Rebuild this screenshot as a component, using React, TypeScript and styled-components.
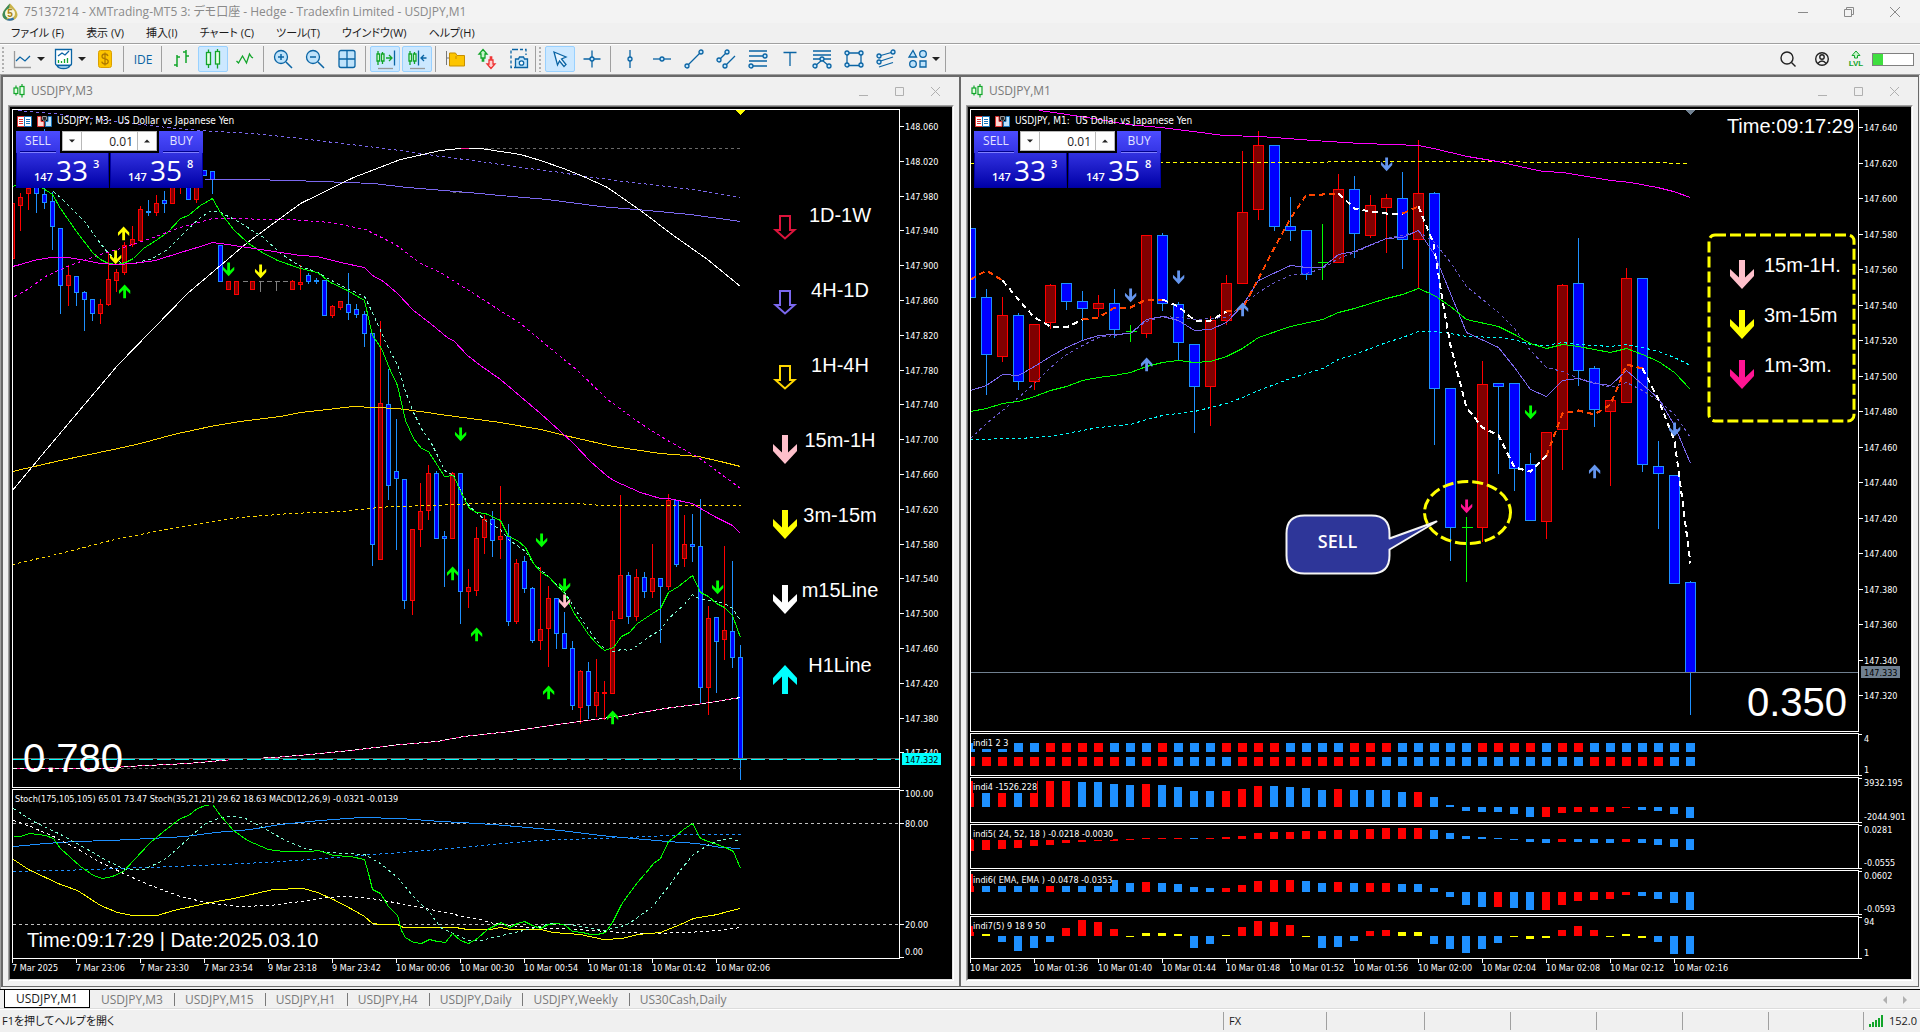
import React from "react";
import styled, { createGlobalStyle, css } from "styled-components";

/* ------------------------------------------------------------------ */
/* Theme                                                               */
/* ------------------------------------------------------------------ */

const UI_FONT = '"Open Sans", "Noto Sans CJK JP", sans-serif';
const CHART_FONT = '"DejaVu Sans Condensed", "Noto Sans", sans-serif';
const LABEL_FONT = '"Liberation Sans", Arial, sans-serif';

const c = {
  face: "#f0f0f0",
  shade: "#a0a0a0",
  dark: "#696969",
  blue: "#0a64a4",
  sky: "#bfe3fb",
  green: "#12a52a",
  up: "#ff0000",
  down: "#1e90ff",
};

const GlobalStyle = createGlobalStyle`
  * { box-sizing: border-box; }
  body { margin: 0; background: ${c.face}; font-family: ${UI_FONT}; font-size: 12px; color: #1a1a1a; }
  button, input { font: inherit; color: inherit; margin: 0; padding: 0; border: 0; background: none; border-radius: 0; }
  svg { display: block; flex: none; }
`;

/* ------------------------------------------------------------------ */
/* Application frame                                                   */
/* ------------------------------------------------------------------ */

const Frame = styled.div`
  display: flex;
  flex-direction: column;
  height: 100vh;
  background: ${c.face};
  overflow: hidden;
`;

const TitleBar = styled.header`
  display: flex;
  align-items: center;
  height: 23px;
  padding: 0 2px;
  background: #f3f3f3;
  color: #8a8a8a;
`;

const AppTitle = styled.h1`
  flex: 1;
  margin: 0 0 0 6px;
  font-size: 12px;
  line-height: 20px;
  font-weight: 400;
  white-space: nowrap;
  font-feature-settings: "palt";
`;

const CaptionButton = styled.button`
  display: grid;
  place-items: center;
  width: 46px;
  height: 20px;
`;

const MenuBar = styled.nav`
  display: flex;
  align-items: center;
  height: 20px;
  padding-left: 11px;
  gap: 22px;
  font-size: 11px;
  line-height: 20px;
  font-feature-settings: "palt";
`;

const MenuButton = styled.button`
  white-space: nowrap;
`;

const ToolBar = styled.div`
  display: flex;
  align-items: center;
  height: 32px;
  border-top: 1px solid ${c.shade};
  border-bottom: 1px solid ${c.shade};
  box-shadow: inset 0 1px 0 #fff;
`;

const Grip = styled.span`
  width: 7px;
  height: 26px;
  background: radial-gradient(circle, #b0b0b0 1px, transparent 1px) 0 0 / 6px 4px repeat-y;
`;

const Divider = styled.span<{ $tight?: boolean }>`
  width: 1px;
  height: 26px;
  margin: ${(p) => (p.$tight ? "0 1px 0 0" : "0 3px 0 2px")};
  background: ${c.shade};
`;

const Tool = styled.button<{ $on?: boolean }>`
  display: grid;
  place-items: center;
  width: 30px;
  height: 26px;
  margin: 0 1px;
  border-radius: 2px;
  color: ${c.blue};
  ${(p) =>
    p.$on &&
    css`
      background: #cce8ff;
      border: 1px solid #99d1ff;
    `}
`;

const DropTool = styled.button`
  display: grid;
  place-items: center;
  width: 9px;
  height: 26px;
  margin: 0 3px 0 -3px;
`;

const Spring = styled.span`
  flex: 1;
`;

const ToolTail = styled.div`
  display: flex;
  align-items: center;
  gap: 2px;
`;

const Meter = styled.div`
  width: 42px;
  height: 13px;
  margin-right: 6px;
  border: 1px solid #808080;
  background: linear-gradient(to right, #3fdf3f 10px, #fff 10px);
`;

/* ------------------------------------------------------------------ */
/* Chart windows                                                       */
/* ------------------------------------------------------------------ */

const Workspace = styled.main`
  display: grid;
  grid-template-columns: minmax(0, 1fr) minmax(0, 1fr);
  flex: 1;
  min-height: 0;
  padding: 0 1px 2px 0;
  border-left: 1px solid ${c.shade};
`;

const ChartWindow = styled.section<{ $first?: boolean }>`
  display: flex;
  flex-direction: column;
  min-height: 0;
  padding: 0 5px 5px;
  border: 1px solid ${c.dark};
  border-top-width: 2px;
  border-left-width: ${(p) => (p.$first ? 2 : 1)}px;
`;

const WindowBar = styled.header`
  display: flex;
  align-items: center;
  height: 28px;
  padding: 0 1px 0 5px;
  color: #7a7a7a;
`;

const WindowTitle = styled.h2`
  flex: 1;
  margin: 0 0 0 6px;
  font-size: 12px;
  line-height: 20px;
  font-weight: 400;
`;

const WindowButton = styled.button`
  display: grid;
  place-items: center;
  width: 36px;
  height: 24px;
`;

const Well = styled.div`
  display: flex;
  flex: 1;
  min-height: 0;
  border: 1px solid ${c.shade};
  border-right-color: #fff;
  border-bottom-color: #fff;
`;

const ChartArea = styled.div`
  display: flex;
  flex-direction: column;
  flex: 1;
  min-width: 0;
  padding: 2px 0 0 2px;
  gap: 1px;
  border: 1px solid ${c.dark};
  border-right-color: #e3e3e3;
  border-bottom-color: #e3e3e3;
  background: #000;
  color: #fff;
  font-family: ${CHART_FONT};
  font-size: 9px;
  line-height: 12px;
`;

const Pane = styled.div<{ $height?: number }>`
  display: grid;
  grid-template-columns: minmax(0, 1fr) 52px;
  min-height: 0;
  ${(p) => (p.$height ? `height: ${p.$height}px;` : "flex: 1;")}
`;

const Plot = styled.div`
  position: relative;
  overflow: hidden;
  border: 1px solid #fff;
`;

const Canvas = styled.svg`
  width: 100%;
  height: 100%;
`;

const AxisCanvas = styled.svg`
  width: 52px;
  height: 100%;
  fill: #fff;
  font-family: ${CHART_FONT};
  font-size: 9px;
`;

const RangeAxis = styled.div`
  display: flex;
  flex-direction: column;
  justify-content: space-between;
  padding-left: 5px;
  background: linear-gradient(#fff, #fff) 0 1px / 3px 1px no-repeat,
    linear-gradient(#fff, #fff) 0 100% / 3px 1px no-repeat;
  white-space: nowrap;
`;

const PaneCaption = styled.span`
  position: absolute;
  top: 3px;
  left: 2px;
  background: #000;
  white-space: nowrap;
`;

const TimeAxis = styled.div`
  display: flex;
  height: 20px;
  margin-top: -1px;
  overflow: hidden;
`;

const TimeTick = styled.span`
  width: 64px;
  flex: none;
  padding-top: 3px;
  white-space: nowrap;
  background: linear-gradient(#fff, #fff) 0 0 / 1px 4px no-repeat;
`;

const ChartHeading = styled.div`
  position: absolute;
  top: 5px;
  left: 4px;
  display: flex;
  align-items: center;
  gap: 5px;
  font-size: 10px;
  white-space: pre;
`;

const BigFigure = styled.output<{ $right?: boolean }>`
  position: absolute;
  bottom: 9px;
  ${(p) => (p.$right ? "right: 11px;" : "left: 10px;")}
  font: 40px / 40px ${LABEL_FONT};
`;

const Clock = styled.time<{ $top?: boolean }>`
  position: absolute;
  ${(p) => (p.$top ? "top: 4px; right: 4px;" : "bottom: 6px; left: 14px;")}
  font: 20px / 24px ${LABEL_FONT};
  white-space: nowrap;
`;

/* One-click trading panel */

const TradePanel = styled.form`
  position: absolute;
  top: 21px;
  left: 3px;
  width: 187px;
  background: #000;
  font-family: ${UI_FONT};
  color: #e4e4ff;
`;

const TradeRow = styled.div`
  display: flex;
  justify-content: space-between;
`;

const SideButton = styled.button`
  width: 44px;
  height: 22px;
  padding-bottom: 2px;
  font-size: 12px;
  line-height: 18px;
  background: linear-gradient(#8080ff, #8080ff) 50% 100% / 36px 1px no-repeat,
    linear-gradient(#00008c, #00008c) 50% 20px / 36px 1px no-repeat,
    linear-gradient(#4c4cff, #3434e4);
`;

const Volume = styled.div`
  display: grid;
  grid-template-columns: 18px 1fr 18px;
  gap: 1px;
  width: 95px;
  height: 20px;
  padding: 1px;
  background: #b8b8b8;
  color: #222;
`;

const Step = styled.button`
  display: grid;
  place-items: center;
  background: #fdfdfd;
`;

const VolumeInput = styled.input`
  min-width: 0;
  padding-right: 4px;
  background: #fff;
  font-size: 12px;
  text-align: right;
`;

const QuoteButton = styled.button`
  display: flex;
  align-items: baseline;
  gap: 3px;
  width: 93px;
  height: 35px;
  padding-left: 17px;
  border: 1px solid #0000a0;
  border-top: 0;
  background: linear-gradient(#3232e0, #0000a8);
  color: #fff;
  font-size: 11px;
  line-height: 34px;
  font-weight: 600;
`;

const Pips = styled.span`
  font-size: 28px;
  font-weight: 400;
`;

const Fraction = styled.span`
  align-self: flex-start;
  padding-left: 2px;
  line-height: 22px;
`;

/* Signal legend */

const LegendBox = styled.ul<{ $framed?: boolean }>`
  position: absolute;
  margin: 0;
  list-style: none;
  ${(p) =>
    p.$framed
      ? "top: 123px; right: 2px; width: 149px; padding: 20px 0 20px 22px;"
      : "top: 93px; right: 19px; padding: 0;"}
`;

const LegendFrame = styled.svg`
  position: absolute;
  inset: 0;
  width: 100%;
  height: 100%;
  rect {
    width: calc(100% - 4px);
    height: calc(100% - 4px);
  }
`;

const LegendRow = styled.li<{ $framed?: boolean }>`
  display: flex;
  height: ${(p) => (p.$framed ? 50 : 75)}px;
  gap: ${(p) => (p.$framed ? 9 : 2)}px;
  font: 20px / 24px ${LABEL_FONT};
  white-space: nowrap;
  svg {
    margin-top: 7px;
  }
`;

const LegendText = styled.span<{ $framed?: boolean }>`
  width: 80px;
  text-align: ${(p) => (p.$framed ? "left" : "center")};
`;

/* ------------------------------------------------------------------ */
/* Bottom bars                                                         */
/* ------------------------------------------------------------------ */

const TabBar = styled.div`
  display: flex;
  align-items: stretch;
  height: 21px;
  padding-left: 4px;
  border-top: 1px solid #000;
  border-bottom: 1px solid #fff;
  box-shadow: inset 0 -1px 0 #dcdcdc;
`;

const TabList = styled.div`
  display: flex;
  flex: 1;
  align-items: flex-start;
`;

const Tab = styled.button<{ $active?: boolean }>`
  position: relative;
  height: 19px;
  padding: 0 11px;
  line-height: 18px;
  color: #7a7a7a;
  & + &::before {
    content: "";
    position: absolute;
    left: 0;
    top: 3px;
    width: 1px;
    height: 13px;
    background: #7a7a7a;
  }
  ${(p) =>
    p.$active &&
    css`
      height: 18px;
      border: 1px solid #000;
      border-top: 0;
      background: #fff;
      color: #1a1a1a;
      & + button::before {
        display: none;
      }
    `}
`;

const ScrollTabs = styled.button`
  display: grid;
  place-items: center;
  width: 20px;
  &:last-child {
    margin-right: 5px;
  }
`;

const StatusBar = styled.footer`
  display: flex;
  align-items: center;
  height: 22px;
  padding-left: 2px;
  font-size: 11px;
  line-height: 18px;
`;

const Hint = styled.span`
  flex: 1;
  font-feature-settings: "palt";
`;

const StatusCell = styled.span<{ $width: number }>`
  display: flex;
  align-items: center;
  gap: 5px;
  width: ${(p) => p.$width}px;
  height: 18px;
  padding-left: 5px;
  border-left: 1px solid ${c.shade};
`;

/* ------------------------------------------------------------------ */
/* Icons                                                               */
/* ------------------------------------------------------------------ */

const Glyph = ({ children, size = 22 }: { children: React.ReactNode; size?: number }) => (
  <svg width={size} height={size} viewBox="0 0 22 22" fill="none" stroke={c.blue} strokeWidth="1.3" aria-hidden>
    {children}
  </svg>
);

const Dot = ({ x, y }: { x: number; y: number }) => <circle cx={x} cy={y} r="2" fill={c.sky} strokeWidth="1.3" />;

const Caret = ({ up = false, size = 7 }: { up?: boolean; size?: number }) => (
  <svg width={size} height="4" viewBox="0 0 8 4" fill="#222" aria-hidden>
    <path d={up ? "M0 4h8L4 0z" : "M0 0h8L4 4z"} />
  </svg>
);

const icons: Record<string, React.ReactNode> = {
  chart: (
    <Glyph>
      <path d="M2.5 3v16.5H19" stroke="#9a9a9a" />
      <path d="M4 13l4-4 5 4 5-5" />
    </Glyph>
  ),
  profile: (
    <Glyph>
      <path d="M2.5 1.5h16v14a2 2 0 0 1-2 2h-12a2 2 0 0 1-2-2z" fill="#fff" />
      <path d="M5 8l4-3 3 2 4-4" />
      <path d="M5.500 15v-3M8.500 15v-2M11.500 15v-4M14.500 15v-5" stroke={c.green} />
      <path d="M4 17.500q1 3 6.500 3t6.500-3z" fill={c.sky} />
    </Glyph>
  ),
  money: (
    <svg width="22" height="22" viewBox="0 0 22 22" aria-hidden>
      <rect x="4.5" y="2.5" width="13" height="17" rx="2" fill="#fdc500" stroke="#dba000" />
      <path d="M14 8c-.5-1.500-1.700-2-3-2-1.700 0-3 .8-3 2.400 0 3.400 6.200 1.700 6.200 5 0 1.600-1.400 2.500-3.200 2.500-1.600 0-2.900-.8-3.200-2.300M11 4.500v13" fill="none" stroke="#b07a00" strokeWidth="1.3" />
    </svg>
  ),
  bars: (
    <Glyph>
      <g stroke={c.green} strokeWidth="1.5">
        <path d="M7 7v12M4 17h3M7 9h3M16 2v13M13 4h3M16 8h3" />
      </g>
    </Glyph>
  ),
  candles: (
    <Glyph>
      <g stroke={c.green} fill="#e6ffe6">
        <path d="M6.500 1.500v3M6.500 16v4M15.500 1v2.500M15.500 16v4.500" />
        <rect x="4.5" y="4.5" width="4" height="12" />
        <rect x="13.5" y="3.5" width="4" height="12.5" />
      </g>
    </Glyph>
  ),
  zigzag: (
    <Glyph>
      <path d="M2.500 13l2 2 4-7 4 7 3-9 2 3 1.500 1" stroke={c.green} />
    </Glyph>
  ),
  zoomIn: (
    <Glyph>
      <circle cx="9" cy="9" r="6.5" fill={c.sky} />
      <path d="M6 9h6M9 6v6M14 14l6 6" strokeWidth="1.5" />
    </Glyph>
  ),
  zoomOut: (
    <Glyph>
      <circle cx="9" cy="9" r="6.5" fill={c.sky} />
      <path d="M6 9h6M14 14l6 6" strokeWidth="1.5" />
    </Glyph>
  ),
  tile: (
    <Glyph>
      <rect x="3" y="2.5" width="16" height="17" rx="2" fill={c.sky} />
      <path d="M11 2.500v17M3 11h16" />
    </Glyph>
  ),
  scrollEnd: (
    <Glyph>
      <g stroke={c.green}>
        <path d="M4 3v14M8.500 4v12M12 10h6M15 7l3 3-3 3" />
        <path d="M3 6h2.500v7H3zM7.500 6H10v7H7.500z" fill="#e6ffe6" />
      </g>
      <path d="M20.500 2.500v15" />
      <path d="M4 20.500h15" stroke="#999" />
    </Glyph>
  ),
  shiftEnd: (
    <Glyph>
      <g stroke={c.green}>
        <path d="M4 3v14M8.500 4v12" />
        <path d="M3 6h2.500v7H3zM7.500 6H10v7H7.500z" fill="#e6ffe6" />
      </g>
      <path d="M12.500 2.500v15M15 10h5.500M18 7l-3 3 3 3" />
      <path d="M4 20.500h15" stroke="#999" />
    </Glyph>
  ),
  folder: (
    <svg width="22" height="22" viewBox="0 0 22 22" aria-hidden>
      <path d="M2.500 3v14M2.500 10H6" stroke="#777" fill="none" />
      <path d="M5.500 5h6l1.500 2.500h7.500v10.500h-15z" fill="#fdc500" stroke="#c78f00" />
      <path d="M12 11V8" stroke="#c78f00" fill="none" />
    </svg>
  ),
  trade: (
    <Glyph>
      <path d="M7 1.500L11 6H9v4H7.700v3H6.300v-3H5V6H3z" fill="#c8f5cc" stroke={c.green} />
      <path d="M15 20.500l-4-4.500h2v-4h1.300V9h1.400v3H17v4h2z" fill="#ffd0d0" stroke="#e33" />
    </Glyph>
  ),
  camera: (
    <Glyph>
      <path d="M7 1.500H3v18h4M7 1.500h11V7" strokeDasharray="3 2" />
      <path d="M7.500 11h3l1-2h4l1 2h3v8.500h-12z" fill={c.sky} />
      <circle cx="13.500" cy="15" r="2.2" fill="#fff" />
    </Glyph>
  ),
  cursor: (
    <Glyph>
      <path d="M5 4l12 5-4.500 2 4.500 5.500-2 2-4.500-5.500-2 4z" fill="#e8f5ff" />
    </Glyph>
  ),
  cross: (
    <Glyph>
      <path d="M11 2.500v17M2.500 11h17" />
      <Dot x={11} y={11} />
    </Glyph>
  ),
  vline: (
    <Glyph>
      <path d="M11 2v18" />
      <Dot x={11} y={11} />
    </Glyph>
  ),
  hline: (
    <Glyph>
      <path d="M2 11h18" />
      <Dot x={11} y={11} />
    </Glyph>
  ),
  trend: (
    <Glyph>
      <path d="M4 18L18 4" />
      <Dot x={4} y={18} />
      <Dot x={18} y={4} />
    </Glyph>
  ),
  channel: (
    <Glyph>
      <path d="M4 12l8-8M10 18L20 8" />
      <Dot x={4} y={12} />
      <Dot x={12} y={4} />
      <Dot x={10} y={18} />
    </Glyph>
  ),
  fibo: (
    <Glyph>
      <path d="M2 3h18M2 8h18M2 13h18M2 18h18" />
      <Dot x={18} y={8} />
      <Dot x={4} y={18} />
    </Glyph>
  ),
  text: (
    <Glyph>
      <path d="M4.500 4.500h13M11 4.500V18" />
    </Glyph>
  ),
  gann: (
    <Glyph>
      <path d="M2 3h18M2 7h18M2 11h18M4 18l7-6 7 6" />
      <Dot x={11} y={11} />
      <Dot x={4} y={18} />
      <Dot x={18} y={18} />
    </Glyph>
  ),
  shape: (
    <Glyph>
      <path d="M4 5h14v12.500H4z" />
      <Dot x={4} y={5} />
      <Dot x={18} y={5} />
      <Dot x={4} y={17} />
      <Dot x={18} y={17} />
    </Glyph>
  ),
  fork: (
    <Glyph>
      <path d="M4 8l14-4M4 13.500l14-4.500M4 19l14-4.500" />
      <Dot x={4} y={8} />
      <Dot x={18} y={4} />
      <Dot x={4} y={14} />
    </Glyph>
  ),
  objects: (
    <Glyph>
      <path d="M2 9l4-6.500L9.500 9z" fill={c.sky} />
      <circle cx="16" cy="6" r="3.3" fill={c.sky} />
      <circle cx="6" cy="16" r="3.3" fill={c.sky} />
      <path d="M13 13h6v6h-6z" fill={c.sky} />
    </Glyph>
  ),
  search: (
    <Glyph>
      <g stroke="#222" strokeWidth="1.4">
        <circle cx="10" cy="10" r="6" />
        <path d="M14.500 14.500l4 4" />
      </g>
    </Glyph>
  ),
  user: (
    <Glyph>
      <g stroke="#222" strokeWidth="1.4">
        <circle cx="11" cy="11" r="6.3" />
        <circle cx="11" cy="9" r="2.2" />
        <path d="M6.800 15.500q4.200-5 8.400 0" />
      </g>
    </Glyph>
  ),
};

const LevelIcon = () => (
  <svg width="22" height="22" viewBox="0 0 22 22" aria-hidden>
    <path d="M11 3l4 4.500h-2.500V10h-3V7.500H7z" fill="#c8f5cc" stroke={c.green} />
    <text x="11" y="18" textAnchor="middle" fontSize="8" fontWeight="700" fontFamily={LABEL_FONT} fill={c.green}>
      LVL
    </text>
  </svg>
);

const AppLogo = () => (
  <svg width="16" height="18" viewBox="0 0 16 18" aria-hidden>
    <path d="M8 .5C10.500 3 15.500 8 15.500 12a7.500 5.500 0 0 1-15 0C.5 8 5.500 3 8 .5z" fill="#c9b34a" />
    <path d="M8 .5C5.500 3 .5 8 .5 12c0 2 1.500 4 4 5z" fill="#3d8a5a" />
    <path d="M4 17q4 1.500 8-.2l-1-3z" fill="#2c6fae" />
    <circle cx="8" cy="10.5" r="5" fill="#fbf6dc" />
    <text x="8" y="14" textAnchor="middle" fontSize="10" fontWeight="700" fontFamily={LABEL_FONT} fill="#a8830e">
      5
    </text>
  </svg>
);

const CandleBadge = () => (
  <svg width="12" height="14" viewBox="0 0 12 14" fill="#e6ffe6" stroke={c.green} strokeWidth="1.2" aria-hidden>
    <path d="M3 1.500v10M9 0v13.500" />
    <rect x="1" y="4" width="3.8" height="5.5" />
    <rect x="7" y="2.5" width="4" height="8" />
  </svg>
);

const BookIcon = () => (
  <svg width="15" height="11" viewBox="0 0 15 11" aria-hidden>
    <path d="M.5.5h7v10h-7z" fill="#fff" stroke="#d33" />
    <path d="M7.500.5h7v10h-7z" fill="#fff" stroke="#1874b8" />
    <path d="M2 3.500h4M2 5.500h4M2 7.500h4" stroke="#d33" />
    <path d="M9 3.500h4M9 5.500h4M9 7.500h4" stroke="#1874b8" />
  </svg>
);

const DepthIcon = () => (
  <svg width="15" height="11" viewBox="0 0 15 11" aria-hidden>
    <path d="M.5.5H4v5h3v5H.5z" fill="#ffd9d2" stroke="#d33" />
    <path d="M14.500.5H11v5H8.500v5h6z" fill="#bfe3fb" stroke="#1874b8" />
    <path d="M5.500.5h4v3l-2 1.500-2-1.500z" fill="#222" stroke="#999" />
  </svg>
);

/* ------------------------------------------------------------------ */
/* Chart drawing helpers                                               */
/* ------------------------------------------------------------------ */

type Candle = [string, number, number, number, number];
type Line = { p: string; s: string; dash?: string; w?: number };
type Mark = { x: number; y: number; up?: boolean; color: string };

const SOLID_UP = "M13 0L25 13v7l-9-8.500V29h-6V11.500L1 20v-7z";
const SOLID_DOWN = "M13 29L25 16V9l-9 8.500V0h-6v17.500L1 9v7z";
const HOLLOW_DOWN = "M8 6h10v14h4.500L13 28.500 3.500 20H8z";

/* Each candle: kind (R rising, B falling, G doji, N flat), high, top, bottom, low */
const Candles = ({ data, x0, pitch, half }: { data: Candle[]; x0: number; pitch: number; half: number }) => (
  <>
    {data.map(([kind, high, top, bottom, low], i) => {
      const x = x0 + i * pitch;
      const stroke = { R: c.up, B: c.down, G: "#00ff00", N: "#808080" }[kind];
      if (kind === "G" || kind === "N") {
        return <path key={i} stroke={stroke} d={`M${x - half} ${top}H${x + half + 1}M${x} ${high}V${low}`} />;
      }
      return (
        <g key={i} stroke={stroke}>
          <path d={`M${x} ${high}V${low}`} />
          <rect x={x - half} y={top} width={half * 2} height={Math.max(1, bottom - top)} fill={kind === "R" ? "#800000" : "#0000ff"} />
        </g>
      );
    })}
  </>
);

const Lines = ({ data }: { data: Line[] }) => (
  <g fill="none">
    {data.map((l, i) => (
      <polyline key={i} points={l.p} stroke={l.s} strokeDasharray={l.dash} strokeWidth={l.w ?? 1} />
    ))}
  </g>
);

const Marks = ({ data }: { data: Mark[] }) => (
  <g shapeRendering="auto" stroke="none">
    {data.map((m, i) => (
      <path key={i} d={m.up ? SOLID_UP : SOLID_DOWN} fill={m.color} transform={`translate(${m.x - 7} ${m.y - 7}) scale(0.47)`} />
    ))}
  </g>
);

/* ------------------------------------------------------------------ */
/* M3 chart data                                                       */
/* ------------------------------------------------------------------ */

const m3Candles: Candle[] = [
  ["R", 203, 203, 258, 258], ["R", 192, 197, 205, 230], ["R", 188, 188, 193, 209], ["B", 186, 186, 193, 212],
  ["B", 128, 194, 202, 208], ["B", 191, 201, 226, 249], ["B", 228, 228, 285, 313], ["R", 264, 275, 285, 305],
  ["B", 276, 276, 292, 305], ["B", 290, 292, 299, 330], ["B", 299, 299, 313, 320], ["R", 298, 304, 313, 323],
  ["R", 252, 279, 304, 305], ["R", 268, 272, 280, 291], ["R", 241, 245, 272, 274], ["R", 225, 239, 244, 246],
  ["R", 205, 209, 240, 241], ["B", 199, 211, 212, 215], ["R", 194, 203, 212, 215], ["B", 190, 200, 203, 212],
  ["R", 186, 186, 203, 203], ["R", 180, 180, 186, 193], ["B", 185, 185, 199, 199], ["R", 185, 185, 199, 202],
  ["B", 170, 170, 175, 175], ["B", 171, 171, 179, 193], ["B", 245, 245, 281, 281], ["R", 281, 281, 289, 289],
  ["R", 281, 281, 294, 294], ["N", 281, 281, 281, 281], ["R", 281, 281, 289, 289], ["N", 281, 281, 281, 291],
  ["N", 281, 281, 281, 281], ["N", 281, 281, 281, 290], ["N", 281, 281, 281, 281], ["R", 279, 281, 289, 289],
  ["R", 264, 282, 284, 289], ["B", 272, 275, 281, 283], ["B", 277, 280, 281, 283], ["B", 280, 280, 315, 315],
  ["R", 304, 306, 315, 317], ["R", 300, 301, 307, 309], ["B", 272, 304, 312, 319], ["B", 303, 309, 314, 317],
  ["B", 310, 314, 333, 346], ["B", 333, 333, 544, 565], ["R", 320, 403, 559, 559], ["B", 368, 404, 485, 499],
  ["B", 418, 471, 478, 549], ["B", 479, 479, 600, 608], ["R", 528, 529, 600, 614], ["R", 482, 511, 529, 546],
  ["R", 464, 473, 510, 519], ["B", 470, 473, 538, 538], ["B", 530, 536, 538, 586], ["R", 471, 473, 538, 538],
  ["B", 473, 473, 591, 623], ["R", 568, 587, 591, 607], ["R", 526, 538, 590, 595], ["R", 514, 519, 537, 553],
  ["B", 510, 519, 540, 556], ["R", 485, 536, 539, 558], ["B", 523, 536, 621, 625], ["R", 558, 563, 621, 623],
  ["B", 555, 561, 588, 592], ["B", 586, 588, 640, 642], ["R", 566, 629, 640, 649], ["R", 585, 598, 628, 666],
  ["B", 597, 598, 633, 648], ["B", 611, 633, 648, 648], ["B", 640, 648, 705, 709], ["R", 669, 671, 707, 723],
  ["B", 661, 671, 705, 718], ["R", 658, 692, 705, 716], ["R", 680, 692, 693, 719], ["R", 610, 620, 693, 693],
  ["R", 494, 575, 618, 618], ["B", 571, 575, 616, 623], ["R", 568, 577, 616, 620], ["B", 571, 577, 591, 597],
  ["R", 543, 578, 591, 597], ["B", 577, 578, 586, 642], ["R", 493, 500, 586, 589], ["B", 500, 500, 564, 566],
  ["R", 514, 544, 558, 566], ["B", 513, 544, 546, 561], ["B", 498, 546, 687, 703], ["R", 605, 618, 687, 714],
  ["B", 617, 617, 641, 692], ["R", 545, 630, 639, 659], ["B", 560, 631, 657, 667], ["B", 644, 657, 758, 779],
];

const m3Trend =
  "12,768 60,768 100,768 127,766 187,763 233,759 273,757 310,754 350,750 400,744 437,741 463,736 510,731 550,725 579,721 625,715 664,708 696,704 716,701 740,697";

const m3Lines: Line[] = [
  { s: "#696969", p: "466,148 740,148", dash: "3 3" },
  { s: "#696969", p: "452,192 468,192", dash: "3 3" },
  { s: "#696969", p: "12,768 740,768", dash: "3 3" },
  { s: "#7b68ee", dash: "3 3", p: "18,110 53,113 80,117 133,123 167,127 213,131 253,133 300,138 333,142 367,146 407,151 440,156 480,161 520,167 553,171 585,176 623,181 667,186 700,190 740,197" },
  { s: "#7b68ee", p: "204,179 249,179 290,180 320,181 373,183 407,187 443,190 479,193 500,195 547,199 600,206 647,210 690,214 740,221" },
  { s: "#ffd700", p: "12,471 60,460 113,449 140,443 173,434 210,426 240,421 280,416 300,412 327,409 353,406 373,407 397,408 427,412 440,414 500,422 540,429 573,437 613,446 660,453 698,456 720,461 740,466" },
  { s: "#ffd700", dash: "3 3", p: "12,564 60,553 110,540 160,530 200,523 240,517 290,513 342,511 368,508 391,506 435,505 474,503 577,503 601,505 740,505" },
  { s: "#ff1493", p: m3Trend },
  { s: "#ffffff", p: m3Trend, dash: "4 3" },
  { s: "#ffffff", p: "12,490 46,449 117,365 187,293 247,242 300,203 353,177 400,159 440,150 460,148 480,148 500,151 520,154 540,160 563,168 583,176 607,187 640,210 673,235 707,259 740,286" },
  { s: "#ff1493", p: "460,148 468,148" },
  { s: "#7fffd4", dash: "3 3", p: "53,191 61,198 68,205 84,221 100,243 108,253 120,262 133,263 152,258 167,249 185,231 200,217 211,210 220,212 236,220 263,237 280,253 300,266 317,272 340,285 364,296 372,312 380,330 388,348 397,364 405,391 413,412 422,430 430,441 437,455 444,470 453,475 461,492 469,506 485,520 500,529 508,539 525,551 533,563 549,577 565,593 580,617 588,629 596,640 604,648 613,651 621,649 629,650 637,645 652,634 660,630 668,618 684,604 692,594 700,599 716,601 724,603 732,608 740,620" },
  { s: "#00ff00", p: "12,186 28,180 46,190 52,194 60,208 76,231 92,252 100,259 108,263 117,264 125,262 133,258 143,248 157,239 167,232 180,218 188,215 200,205 212,198 220,212 233,229 247,242 260,251 277,260 300,268 317,272 330,282 347,290 364,300 372,335 381,348 389,368 397,385 405,420 413,438 421,448 428,451 437,465 444,476 453,475 461,493 469,508 476,512 485,513 500,520 508,536 517,540 525,547 533,563 541,572 549,577 557,586 565,594 573,612 580,622 588,634 596,643 604,650 613,647 621,636 629,632 637,623 652,613 660,608 668,592 678,586 692,575 700,592 708,596 716,603 724,607 732,615 740,637" },
  { s: "#ff00ff", dash: "3 3", p: "14,296 27,289 45,276 60,269 72,264 100,254 120,248 150,238 180,227 212,218 290,219 330,222 350,226 365,229 395,244 420,263 440,272 473,293 520,323 550,348 577,370 607,399 640,423 667,440 698,457 740,488" },
  { s: "#ff00ff", p: "12,266 20,264 33,260 50,257 67,257 80,259 100,263 117,264 133,263 155,260 180,252 200,246 212,242 227,244 260,249 300,255 317,256 340,262 364,267 372,275 383,281 397,293 413,310 430,323 448,338 453,340 467,355 480,365 500,379 520,396 540,413 560,431 573,443 590,461 606,475 613,480 640,492 660,498 668,498 692,503 700,508 716,517 732,525 740,533" },
  { s: "#696969", p: "12,758 900,758" },
  { s: "#00ffff", p: "12,759 900,759", dash: "14 4" },
];

const LIME = "#00ff00";
const m3Marks: Mark[] = [
  { x: 116, y: 257, color: "#ffff00" },
  { x: 124, y: 233, color: "#ffff00", up: true },
  { x: 261, y: 271, color: "#ffff00" },
  { x: 125, y: 291, color: LIME, up: true },
  { x: 229, y: 269, color: LIME },
  { x: 461, y: 434, color: LIME },
  { x: 453, y: 573, color: LIME, up: true },
  { x: 477, y: 634, color: LIME, up: true },
  { x: 549, y: 692, color: LIME, up: true },
  { x: 613, y: 717, color: LIME, up: true },
  { x: 542, y: 540, color: LIME },
  { x: 565, y: 585, color: LIME },
  { x: 718, y: 587, color: LIME },
  { x: 565, y: 601, color: "#ffc0cb" },
];

const stochLines: Line[] = [
  { s: "#c0c0c0", dash: "3 3", p: "12,823 900,823" },
  { s: "#c0c0c0", dash: "3 3", p: "12,924 900,924" },
  { s: "#1e90ff", p: "13,846 25,845 45,843 75,841 110,840 150,838 185,836 215,832 250,829 280,824 320,820 360,817 400,818 440,821 460,822 493,824 527,827 560,830 600,835 633,838 667,841 697,843 720,847 740,848" },
  { s: "#1e90ff", dash: "3 3", p: "13,871 60,870 120,868 200,865 265,862 310,859 360,855 400,852 440,849 460,847 493,844 537,840 567,839 627,837 687,834 740,834" },
  { s: "#ffffff", dash: "3 3", p: "13,820 30,826 53,836 80,850 100,862 115,869 125,874 150,885 180,896 210,903 240,906 270,905 300,901 325,897 345,896 370,898 400,903 425,908 450,913 462,916 480,919 493,923 527,927 560,928 593,930 620,932 653,933 687,932 717,930 740,927" },
  { s: "#ffff00", p: "13,859 28,869 45,877 60,884 77,890 100,905 117,912 132,915 157,915 173,910 205,903 233,898 273,889 303,888 317,892 333,899 350,908 364,916 372,923 380,924 397,924 403,927 455,927 467,929 490,929 500,927 510,929 540,929 553,932 580,934 603,939 622,938 637,934 660,932 680,924 693,918 717,914 727,911 740,908" },
  { s: "#7fffd4", dash: "3 3", p: "13,808 33,821 60,834 80,845 110,862 125,869 143,869 163,860 175,850 190,836 205,823 220,817 233,816 245,818 260,826 285,840 305,848 330,852 364,854 380,863 397,877 413,896 430,913 440,927 455,934 468,940 480,940 493,937 510,933 532,928 550,923 567,924 587,927 603,930 617,927 627,924 637,917 652,906 668,886 682,867 693,854 707,845 718,840 730,838 739,841" },
  { s: "#00ff00", p: "13,836 20,836 29,833 45,835 53,838 60,848 80,866 93,875 102,878 112,876 123,871 133,860 150,842 163,831 180,818 188,815 197,808 205,805 212,804 220,815 233,830 247,840 268,849 283,851 310,851 318,850 333,855 350,856 364,859 368,873 372,889 380,893 388,906 397,915 401,930 405,937 413,942 421,943 429,939 437,941 445,942 452,933 460,940 468,943 477,938 487,929 501,922 509,927 517,923 524,921 532,925 540,928 548,924 558,923 565,925 572,931 582,932 590,934 597,934 605,932 612,922 621,904 628,894 637,882 645,873 653,863 660,858 668,841 676,835 683,829 692,823 700,838 708,841 725,847 733,851 740,868" },
];

const m3Times = [
  "7 Mar 2025", "7 Mar 23:06", "7 Mar 23:30", "7 Mar 23:54", "9 Mar 23:18", "9 Mar 23:42",
  "10 Mar 00:06", "10 Mar 00:30", "10 Mar 00:54", "10 Mar 01:18", "10 Mar 01:42", "10 Mar 02:06",
];

/* ------------------------------------------------------------------ */
/* M1 chart data                                                       */
/* ------------------------------------------------------------------ */

const m1Candles: Candle[] = [
  ["B", 228, 228, 297, 297], ["B", 288, 297, 354, 394], ["R", 296, 315, 356, 361], ["B", 312, 315, 381, 389],
  ["R", 324, 324, 381, 389], ["R", 283, 285, 322, 328], ["B", 283, 283, 301, 309], ["B", 290, 301, 308, 340],
  ["R", 294, 303, 308, 316], ["B", 288, 303, 329, 337], ["G", 324, 331, 331, 341], ["R", 235, 235, 333, 337],
  ["B", 232, 235, 303, 310], ["B", 301, 304, 342, 359], ["B", 344, 344, 386, 432], ["R", 315, 320, 386, 425],
  ["R", 274, 283, 320, 324], ["R", 150, 212, 283, 283], ["R", 130, 145, 209, 219], ["B", 145, 145, 226, 230],
  ["B", 196, 226, 230, 240], ["B", 230, 230, 274, 279], ["G", 223, 262, 262, 279], ["R", 173, 189, 262, 262],
  ["B", 175, 189, 233, 257], ["R", 194, 205, 235, 237], ["R", 193, 198, 207, 252], ["B", 171, 198, 239, 268],
  ["R", 139, 193, 239, 288], ["B", 191, 193, 388, 444], ["B", 388, 388, 527, 560], ["G", 516, 527, 527, 581],
  ["R", 360, 384, 527, 541], ["B", 383, 383, 386, 473], ["B", 383, 383, 468, 490], ["B", 452, 464, 520, 520],
  ["R", 432, 432, 521, 538], ["R", 283, 285, 429, 469], ["B", 237, 283, 370, 385], ["B", 365, 368, 409, 426],
  ["R", 400, 400, 411, 485], ["R", 267, 278, 402, 402], ["B", 278, 278, 464, 471], ["B", 440, 466, 473, 528],
  ["B", 475, 475, 583, 583], ["B", 580, 582, 672, 714],
];

const ORANGE = "#ff4500";
const m1Lines: Line[] = [
  { s: "#708090", p: "970,672 1860,672" },
  { s: "#ffff00", dash: "4 3", p: "970,163 1000,162 1327,162 1328,161 1522,161 1523,162 1667,162 1668,163 1688,163" },
  { s: "#ff00ff", p: "1039,110 1060,113 1093,118 1127,124 1160,127 1193,131 1223,135 1260,136 1313,140 1360,143 1393,144 1418,145 1433,148 1467,156 1497,161 1533,169 1543,171 1563,172 1610,180 1630,182 1657,187 1673,191 1690,197" },
  { s: "#00ffff", dash: "3 3", p: "970,439 1018,438 1050,436 1082,430 1098,427 1130,424 1146,419 1162,415 1194,411 1210,407 1226,403 1242,397 1258,390 1290,378 1322,368 1338,359 1354,354 1386,342 1402,337 1418,331 1434,331 1450,333 1466,336 1498,337 1514,339 1530,344 1546,345 1562,342 1578,344 1610,346 1626,344 1642,347 1658,351 1674,357 1690,365" },
  { s: "#6a5acd", dash: "3 3", p: "970,438 986,423 1002,410 1018,397 1034,383 1050,367 1066,354 1082,345 1098,337 1130,333 1146,321 1162,316 1178,317 1194,319 1226,317 1242,305 1258,292 1274,282 1290,275 1306,273 1322,268 1338,258 1354,252 1386,238 1402,235 1418,231 1434,242 1450,262 1466,286 1498,312 1514,328 1530,350 1546,367 1562,371 1578,378 1594,382 1610,387 1626,382 1642,390 1658,400 1674,414 1690,437" },
  { s: "#7b68ee", p: "970,390 986,385 1002,374 1018,375 1034,366 1050,356 1066,347 1082,340 1098,335 1114,334 1130,333 1146,319 1162,316 1178,320 1194,330 1210,329 1226,322 1242,305 1258,280 1290,265 1306,267 1322,267 1338,254 1354,251 1386,238 1402,237 1418,230 1434,254 1450,293 1466,332 1498,347 1514,367 1530,389 1546,396 1562,380 1578,378 1594,383 1610,385 1626,370 1642,384 1658,398 1674,425 1690,463" },
  { s: "#00ff00", p: "970,411 986,408 1002,403 1018,401 1034,396 1050,390 1066,386 1082,380 1098,377 1114,375 1130,372 1146,366 1162,362 1178,360 1194,362 1210,361 1226,356 1242,348 1258,337 1290,326 1322,319 1338,312 1354,308 1386,298 1402,294 1418,288 1434,295 1450,306 1466,319 1498,326 1514,334 1530,343 1546,348 1562,344 1578,346 1610,352 1626,348 1642,354 1658,361 1674,372 1690,389" },
  { s: ORANGE, w: 2, dash: "6 4", p: "970,279 986,270 1002,280" },
  { s: "#ffffff", w: 2, dash: "6 4", p: "1002,280 1018,299 1034,317 1050,326 1066,327 1082,319" },
  { s: ORANGE, w: 2, dash: "6 4", p: "1082,319 1098,317 1114,307 1130,307 1146,299 1162,299" },
  { s: "#ffffff", w: 2, dash: "6 4", p: "1162,299 1178,306 1194,320 1210,320 1226,311" },
  { s: ORANGE, w: 2, dash: "6 4", p: "1226,311 1242,308 1258,278 1274,247 1290,218 1306,194 1322,194 1338,193" },
  { s: "#ffffff", w: 2, dash: "6 4", p: "1338,193 1354,208 1370,211 1386,213 1402,213" },
  { s: ORANGE, w: 2, dash: "6 4", p: "1402,213 1418,206" },
  { s: "#ffffff", w: 2, dash: "6 4", p: "1418,206 1433,243 1442,300 1450,345 1466,407 1482,427 1498,435 1514,467 1530,471 1546,455" },
  { s: ORANGE, w: 2, dash: "6 4", p: "1546,455 1562,413 1578,410 1594,414 1610,404 1617,387 1626,364 1642,368" },
  { s: "#ffffff", w: 2, dash: "6 4", p: "1642,368 1657,397 1674,440 1681,493 1690,563" },
];

const CORN = "#6495ed";
const m1Marks: Mark[] = [
  { x: 1131, y: 295, color: CORN },
  { x: 1179, y: 277, color: CORN },
  { x: 1387, y: 164, color: CORN },
  { x: 1675, y: 429, color: CORN },
  { x: 1147, y: 364, color: CORN, up: true },
  { x: 1243, y: 309, color: CORN, up: true },
  { x: 1595, y: 471, color: CORN, up: true },
  { x: 1531, y: 412, color: LIME },
  { x: 1467, y: 506, color: "#ff1493" },
];

const m1Times = ["10 Mar 2025", ...["01:36", "01:40", "01:44", "01:48", "01:52", "01:56", "02:00", "02:04", "02:08", "02:12", "02:16"].map((t) => `10 Mar ${t}`)];

const signalRows = [
  "BBBBBRRRRBBBRBBBRRRRBBBBRRRBBBBBRRRRBRRBBBBBBB",
  "RRRRRRRRRRBRRBBBBRRRRRRRRRBBBBBBBBBBBBBRRRRRBB",
];

type Histogram = { name: string; height: number; base: number; range: [string, string]; bars: string };

const histograms: Histogram[] = [
  {
    name: "indi4 -1526.228", height: 46, base: 29, range: ["3932.195", "-2044.901"],
    bars: "R26 B26 R26 B26 R26 R26 R26 B25 B25 B23 B22 R23 B22 B20 B16 B16 R16 R18 R21 B21 B20 B19 B17 R18 B17 B17 B17 B15 R15 B10 B2 B-4 B-5 B-5 B-7 B-10 R-10 R-6 R-5 R-5 R-5 R-1 B-3 B-4 B-7 B-11",
  },
  {
    name: "indi5( 24, 52, 18 ) -0.0218 -0.0030", height: 45, base: 14, range: ["0.0281", "-0.0555"],
    bars: "R-12 R-11 R-10 R-9 R-7 R-6 R-4 R-3 R-2 R-2 R-1 R1 R1 R1 B1 R1 R2 R3 R6 R7 R7 R8 R8 R9 R9 R10 R11 R11 R11 B9 B6 B3 B2 B1 B-1 B-3 B-4 R-3 B-3 B-4 B-4 R-3 B-4 B-6 B-8 B-11",
  },
  {
    name: "indi6( EMA, EMA ) -0.0478 -0.0353", height: 45, base: 21, range: ["0.0602", "-0.0593"],
    bars: "R18 B12 B12 B12 B12 R12 B12 B12 B12 B12 B9 R10 B9 B8 B5 B4 R4 R7 R11 R12 R12 B11 B9 R10 B9 R9 R9 B8 B8 B4 B-5 B-13 B-15 R-15 B-16 B-18 R-18 R-13 R-9 R-8 R-7 R-3 B-4 B-7 B-11 B-18",
  },
  {
    name: "indi7(5) 9 18 9 50", height: 43, base: 19, range: ["94", "1"],
    bars: "R10 Y2 B-6 B-15 B-12 B-6 R8 R16 R14 R7 Y-1 Y3 Y3 Y2 B-12 B-8 Y1 R9 R15 R14 R11 Y-1 B-12 B-11 B-5 R5 R6 Y4 Y4 B-8 B-13 B-17 B-13 B-7 Y-1 Y-3 Y-2 R6 R10 R6 Y-1 Y2 Y-2 B-6 B-18 B-18",
  },
];

const barColor: Record<string, string> = { R: "#ff0000", B: "#1e90ff", Y: "#ffff00" };

/* ------------------------------------------------------------------ */
/* Shared chart parts                                                  */
/* ------------------------------------------------------------------ */

const PriceAxis = (p: { first: number; step: number; count: number; top: number; pitch: number; now: string; nowY: number; nowFill: string }) => (
  <AxisCanvas>
    {Array.from({ length: p.count }, (_, i) => {
      const y = Math.round(p.top + i * p.pitch);
      return (
        <g key={i}>
          <rect x="0" y={y} width="4" height="1" />
          <text x="5" y={y + 4}>{((p.first - i * p.step) / 1000).toFixed(3)}</text>
        </g>
      );
    })}
    <rect x="2" y={p.nowY - 6} width="39" height="12" fill={p.nowFill} />
    <text x="5" y={p.nowY + 4} fill="#000">{p.now}</text>
  </AxisCanvas>
);

const OneClick = ({ id }: { id: string }) => (
  <TradePanel onSubmit={(e) => e.preventDefault()}>
    <TradeRow>
      <SideButton type="button">SELL</SideButton>
      <Volume>
        <Step type="button" aria-label="Decrease volume"><Caret size={6} /></Step>
        <VolumeInput id={id} aria-label="Volume" defaultValue="0.01" />
        <Step type="button" aria-label="Increase volume"><Caret up size={6} /></Step>
      </Volume>
      <SideButton type="button">BUY</SideButton>
    </TradeRow>
    <TradeRow>
      <QuoteButton type="button">147<Pips>33</Pips><Fraction>3</Fraction></QuoteButton>
      <QuoteButton type="button">147<Pips>35</Pips><Fraction>8</Fraction></QuoteButton>
    </TradeRow>
  </TradePanel>
);

const Heading = ({ text }: { text: string }) => (
  <ChartHeading>
    <BookIcon />
    <DepthIcon />
    <span>{text}</span>
  </ChartHeading>
);

type LegendItem = { text: string; color: string; shape: "hollow" | "down" | "up" };

const Legend = ({ items, framed }: { items: LegendItem[]; framed?: boolean }) => (
  <LegendBox $framed={framed}>
    {framed && (
      <LegendFrame aria-hidden>
        <rect x="2" y="2" rx="6" fill="none" stroke="#ffff00" strokeWidth="3" strokeDasharray="11 4" />
      </LegendFrame>
    )}
    {items.map((it) => (
      <LegendRow key={it.text} $framed={framed}>
        <svg width="26" height="34" aria-hidden>
          {it.shape === "hollow" ? (
            <path d={HOLLOW_DOWN} fill="none" stroke={it.color} strokeWidth="2" />
          ) : (
            <path d={it.shape === "up" ? SOLID_UP : SOLID_DOWN} fill={it.color} transform={it.shape === "up" ? "translate(0 5)" : undefined} />
          )}
        </svg>
        <LegendText $framed={framed}>{it.text}</LegendText>
      </LegendRow>
    ))}
  </LegendBox>
);

const WindowHeader = ({ title }: { title: string }) => (
  <WindowBar>
    <CandleBadge />
    <WindowTitle>{title}</WindowTitle>
    {[
      ["Minimize", "M0 10.500h9"],
      ["Maximize", "M.5 2.500h8v8h-8z"],
      ["Close", "M0 2l9 9M9 2l-9 9"],
    ].map(([label, d]) => (
      <WindowButton key={label} aria-label={label}>
        <svg width="9" height="12" fill="none" stroke="#b0b0b0" aria-hidden><path d={d} /></svg>
      </WindowButton>
    ))}
  </WindowBar>
);

const TimeScale = ({ times }: { times: string[] }) => (
  <TimeAxis>{times.map((t) => <TimeTick key={t}>{t}</TimeTick>)}</TimeAxis>
);

/* ------------------------------------------------------------------ */
/* Windows                                                             */
/* ------------------------------------------------------------------ */

const M3Window = () => (
  <ChartWindow $first>
    <WindowHeader title="USDJPY,M3" />
    <Well>
      <ChartArea>
        <Pane>
          <Plot>
            <Canvas shapeRendering="crispEdges" aria-label="USDJPY M3 price chart">
              <path d="M722 0h10l-5 5z" fill="#ffff00" />
              <g transform="translate(-12.5 -109.5)">
                <Candles data={m3Candles} x0={12} pitch={8} half={2} />
                <Lines data={m3Lines} />
                <Marks data={m3Marks} />
              </g>
            </Canvas>
            <Heading text="USDJPY, M3:  US Dollar vs Japanese Yen" />
            <OneClick id="volume-m3" />
            <Legend
              items={[
                { text: "1D-1W", color: "#dc143c", shape: "hollow" },
                { text: "4H-1D", color: "#7b68ee", shape: "hollow" },
                { text: "1H-4H", color: "#ffd700", shape: "hollow" },
                { text: "15m-1H", color: "#ffc0cb", shape: "down" },
                { text: "3m-15m", color: "#ffff00", shape: "down" },
                { text: "m15Line", color: "#ffffff", shape: "down" },
                { text: "H1Line", color: "#00ffff", shape: "up" },
              ]}
            />
            <BigFigure>0.780</BigFigure>
          </Plot>
          <PriceAxis first={148060} step={40} count={19} top={17} pitch={34.8} now="147.332" nowY={650} nowFill="#00ffff" />
        </Pane>
        <Pane $height={170}>
          <Plot>
            <Canvas shapeRendering="crispEdges" aria-label="Stochastic and MACD">
              <g transform="translate(-12.5 -789.5)">
                <Lines data={stochLines} />
              </g>
            </Canvas>
            <PaneCaption>Stoch(175,105,105) 65.01 73.47 Stoch(35,21,21) 29.62 18.63 MACD(12,26,9) -0.0321 -0.0139</PaneCaption>
            <Clock>Time:09:17:29 | Date:2025.03.10</Clock>
          </Plot>
          <AxisCanvas>
            {([["100.00", 1, 8], ["80.00", 34, 38], ["20.00", 135, 139], ["0.00", 168, 166]] as [string, number, number][]).map(([t, y, ty]) => (
              <g key={t}>
                <rect x="0" y={y} width="4" height="1" />
                <text x="5" y={ty}>{t}</text>
              </g>
            ))}
          </AxisCanvas>
        </Pane>
        <TimeScale times={m3Times} />
      </ChartArea>
    </Well>
  </ChartWindow>
);

const M1Window = () => (
  <ChartWindow>
    <WindowHeader title="USDJPY,M1" />
    <Well>
      <ChartArea>
        <Pane>
          <Plot>
            <Canvas shapeRendering="crispEdges" aria-label="USDJPY M1 price chart">
              <path d="M714 0h10l-5 5z" fill="#708090" />
              <g transform="translate(-970.5 -109.5)">
                <Candles data={m1Candles} x0={970} pitch={16} half={5} />
                <Lines data={m1Lines} />
                <Marks data={m1Marks} />
                <g shapeRendering="auto">
                  <ellipse cx="1467" cy="512" rx="43" ry="31" fill="none" stroke="#ffff00" strokeWidth="3" strokeDasharray="11 4" />
                  <path
                    d="M1304 515h67q18 0 18 18v5l47-17-47 28v6q0 18-18 18h-67q-18 0-18-18v-22q0-18 18-18z"
                    fill="#2e3699"
                    stroke="#f4f4f4"
                    strokeWidth="2"
                    strokeLinejoin="round"
                  />
                  <text x="1337" y="547" textAnchor="middle" fill="#fff" fontFamily={UI_FONT} fontSize="18" fontWeight="600">SELL</text>
                </g>
              </g>
            </Canvas>
            <Heading text="USDJPY, M1:  US Dollar vs Japanese Yen" />
            <OneClick id="volume-m1" />
            <Clock $top>Time:09:17:29</Clock>
            <Legend
              framed
              items={[
                { text: "15m-1H.", color: "#ffc0cb", shape: "down" },
                { text: "3m-15m", color: "#ffff00", shape: "down" },
                { text: "1m-3m.", color: "#ff1493", shape: "down" },
              ]}
            />
            <BigFigure $right>0.350</BigFigure>
          </Plot>
          <PriceAxis first={147640} step={20} count={17} top={18} pitch={35.5} now="147.333" nowY={563} nowFill="#708090" />
        </Pane>
        <Pane $height={43}>
          <Plot>
            <Canvas shapeRendering="crispEdges" aria-label="Signal rows">
              {signalRows.map((row, r) =>
                row.split("").map((k, i) => (
                  <rect key={`${r}-${i}`} x={i * 16 - 5} y={r ? 23 : 9} width="9" height="9" fill={barColor[k]} />
                ))
              )}
            </Canvas>
            <PaneCaption>indi1 2 3</PaneCaption>
          </Plot>
          <RangeAxis><span>4</span><span>1</span></RangeAxis>
        </Pane>
        {histograms.map((h) => (
          <Pane key={h.name} $height={h.height}>
            <Plot>
              <Canvas shapeRendering="crispEdges" aria-label={h.name}>
                {h.bars.split(" ").map((bar, i) => {
                  const v = Number(bar.slice(1));
                  return <rect key={i} x={i * 16 - 5} y={v > 0 ? h.base - v : h.base} width="8" height={Math.abs(v)} fill={barColor[bar[0]]} />;
                })}
              </Canvas>
              <PaneCaption>{h.name}</PaneCaption>
            </Plot>
            <RangeAxis><span>{h.range[0]}</span><span>{h.range[1]}</span></RangeAxis>
          </Pane>
        ))}
        <TimeScale times={m1Times} />
      </ChartArea>
    </Well>
  </ChartWindow>
);

/* ------------------------------------------------------------------ */
/* Toolbar                                                             */
/* ------------------------------------------------------------------ */

const Tools = ({ names, on = [] }: { names: string[]; on?: string[] }) => (
  <>
    {names.map((n) => (
      <Tool key={n} aria-label={n} $on={on.includes(n)}>{icons[n]}</Tool>
    ))}
  </>
);

const MainToolBar = () => (
  <ToolBar role="toolbar">
    <Grip />
    <Tools names={["chart"]} />
    <DropTool aria-label="New chart list"><Caret size={8} /></DropTool>
    <Tools names={["profile"]} />
    <DropTool aria-label="Profile list"><Caret size={8} /></DropTool>
    <Tools names={["money"]} />
    <Divider />
    <Tool>IDE</Tool>
    <Divider />
    <Tools names={["bars", "candles", "zigzag"]} on={["candles"]} />
    <Divider />
    <Tools names={["zoomIn", "zoomOut", "tile"]} />
    <Divider />
    <Tools names={["scrollEnd", "shiftEnd"]} on={["scrollEnd", "shiftEnd"]} />
    <Divider />
    <Tools names={["folder", "trade", "camera"]} />
    <Divider $tight />
    <Grip />
    <Tools names={["cursor", "cross"]} on={["cursor"]} />
    <Divider />
    <Tools names={["vline", "hline", "trend", "channel", "fibo", "text", "gann", "shape", "fork", "objects"]} />
    <DropTool aria-label="Object list"><Caret size={8} /></DropTool>
    <Divider />
    <Spring />
    <ToolTail>
      <Tools names={["search", "user"]} />
      <Tool aria-label="Level"><LevelIcon /></Tool>
    </ToolTail>
    <Meter role="meter" aria-label="Level progress" aria-valuenow={25} aria-valuemin={0} aria-valuemax={100} />
  </ToolBar>
);

const menu = ["ファイル (F)", "表示 (V)", "挿入(I)", "チャート (C)", "ツール(T)", "ウインドウ(W)", "ヘルプ(H)"];
const tabs = ["USDJPY,M1", "USDJPY,M3", "USDJPY,M15", "USDJPY,H1", "USDJPY,H4", "USDJPY,Daily", "USDJPY,Weekly", "US30Cash,Daily"];
const captions: [string, string][] = [
  ["Minimize", "M1 6.500h10"],
  ["Restore", "M1.500 3.500h7v7h-7zM3.500 3.500v-2h7v7h-2"],
  ["Close", "M1 1l10 10M11 1L1 11"],
];

export default function App() {
  return (
    <>
      <GlobalStyle />
      <Frame>
        <TitleBar>
          <AppLogo />
          <AppTitle>75137214 - XMTrading-MT5 3: デモ口座 - Hedge - Tradexfin Limited - USDJPY,M1</AppTitle>
          {captions.map(([label, d]) => (
            <CaptionButton key={label} aria-label={label}>
              <svg width="12" height="12" fill="none" stroke="#8a8a8a" aria-hidden><path d={d} /></svg>
            </CaptionButton>
          ))}
        </TitleBar>
        <MenuBar>{menu.map((m) => <MenuButton key={m}>{m}</MenuButton>)}</MenuBar>
        <MainToolBar />
        <Workspace>
          <M3Window />
          <M1Window />
        </Workspace>
        <TabBar>
          <TabList role="tablist">
            {tabs.map((t, i) => <Tab key={t} role="tab" aria-selected={i === 0} $active={i === 0}>{t}</Tab>)}
          </TabList>
          <ScrollTabs aria-label="Scroll left"><svg width="4" height="8" fill="#b0b0b0" aria-hidden><path d="M4 0v8L0 4z" /></svg></ScrollTabs>
          <ScrollTabs aria-label="Scroll right"><svg width="4" height="8" fill="#b0b0b0" aria-hidden><path d="M0 0v8l4-4z" /></svg></ScrollTabs>
        </TabBar>
        <StatusBar>
          <Hint>F1を押してヘルプを開く</Hint>
          <StatusCell $width={103}>FX</StatusCell>
          {[98, 86, 86, 86, 86, 95].map((w, i) => <StatusCell key={i} $width={w} />)}
          <StatusCell $width={57}>
            <svg width="15" height="12" stroke={c.green} strokeWidth="2" aria-hidden>
              <path d="M1 12V9M4 12V7M7 12V5M10 12V3M13 12V0" />
            </svg>
            152.0
          </StatusCell>
        </StatusBar>
      </Frame>
    </>
  );
}
